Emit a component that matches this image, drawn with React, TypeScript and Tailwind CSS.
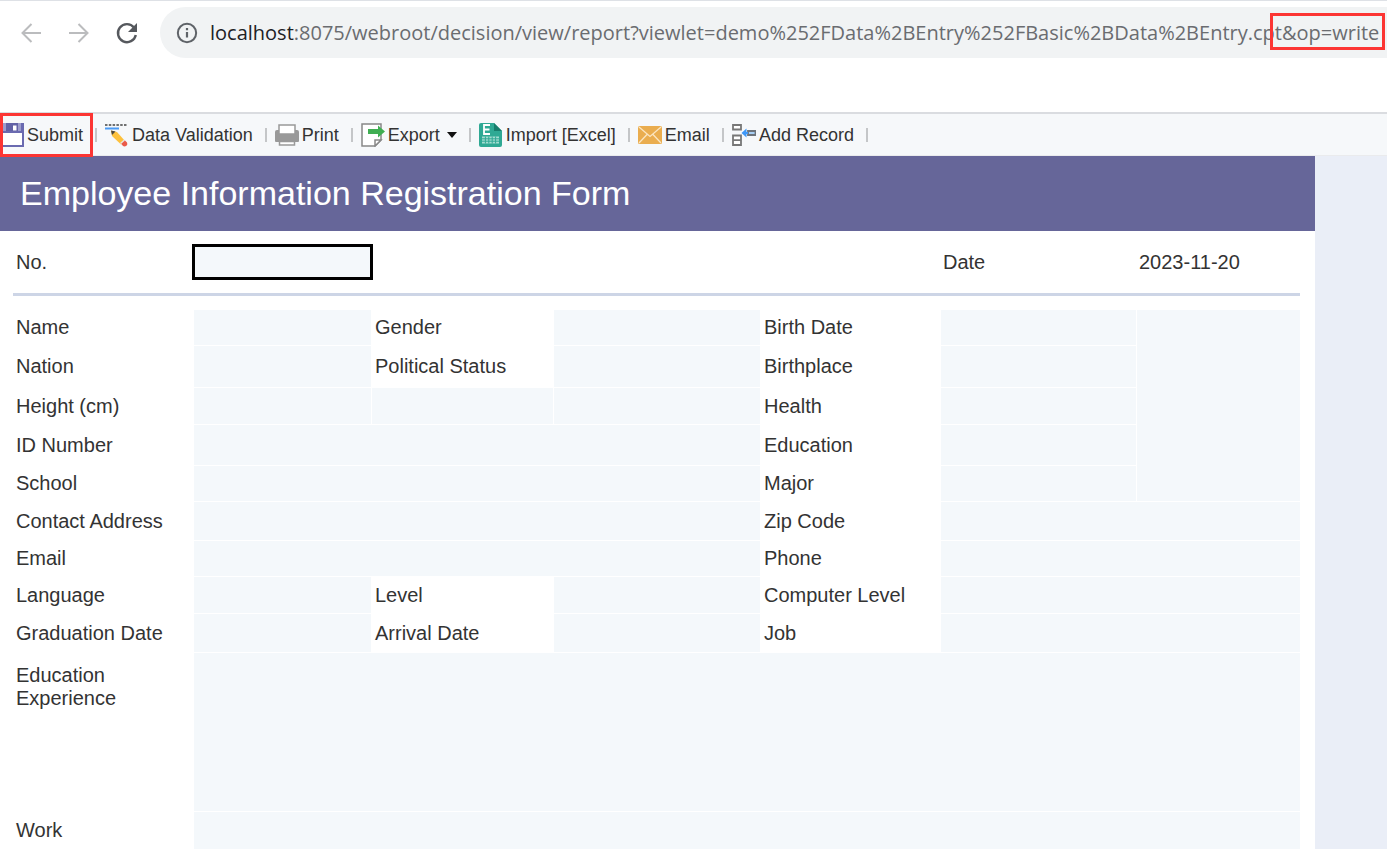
import { ReactNode, useState } from 'react';

interface ToolItem {
  label: string;
  icon: ReactNode;
  caret?: boolean;
}

interface Cell {
  label?: string;
  name?: string;
  span?: string;
  area?: boolean;
}

const SaveIcon = () => (
  <svg viewBox="0 0 24 24" className="h-6 w-6 shrink-0">
    <path d="M0 0h24v24H1.500L0 22.500z" fill="#6a6ab0" />
    <path d="M3 0h3v8H3zM18 0h3v8h-3z" fill="#9d9dcc" />
    <path d="M6 0h12v8H6z" fill="#6262a6" />
    <path d="M13 2.500h3.500v5H13z" fill="#fff" />
    <path d="M2 10h20v12H2z" fill="#fff" />
  </svg>
);

const ValidationIcon = () => (
  <svg viewBox="0 0 24 24" className="h-6 w-6 shrink-0">
    <path d="M0 2h22" stroke="#444" strokeWidth="1.500" strokeDasharray="2.500 1.300" />
    <path d="M0 5.500h14" stroke="#4a9bf5" strokeWidth="2" />
    <path d="m6 7.500 6 1.500 8 9-4 3.500L7 13z" fill="#fdc13c" />
    <path d="m6 7.500 4.500 1L7 12z" fill="#4b4740" />
    <path d="m16 20.500 3.500-3.500 2.500 2.500q1 2-.5 3.200-2 1.300-3.500.3z" fill="#ea5a49" />
    <path d="m15.500 20.500 4-3.500" stroke="#e6e6e6" strokeWidth="1.500" />
  </svg>
);

const PrintIcon = () => (
  <svg viewBox="0 0 24 24" className="h-6 w-6 shrink-0">
    <path d="M0 9q0-2 2-2h20q2 0 2 2v9q0 1-1 1H1q-1 0-1-1z" fill="#999" />
    <path d="M4 2h16v9H4z" fill="#fff" stroke="#999" strokeWidth="1.500" />
    <path d="M4.500 18.500h15V22h-15z" fill="#fff" stroke="#999" strokeWidth="1.500" />
  </svg>
);

const ExportIcon = () => (
  <svg viewBox="0 0 24 24" className="h-6 w-6 shrink-0">
    <path d="M1 1h19v16l-6 6H1z" fill="#fff" stroke="#888" strokeWidth="1.500" />
    <path d="M14 23v-6h6z" fill="#fff" stroke="#888" strokeWidth="1.500" />
    <path d="M7 6h10V2.500L24 8.500l-7 6V11H7z" fill="#3fae52" />
  </svg>
);

const ImportIcon = () => (
  <svg viewBox="0 0 24 24" className="h-6 w-6 shrink-0">
    <path d="M2 0h13l8 8v14q0 2-2 2H2q-2 0-2-2V2q0-2 2-2z" fill="#2fa994" />
    <path d="M15 0v8h8z" fill="#187d6c" />
    <path d="M11 2H5v9h6M5 6.500h5.500" fill="none" stroke="#fff" strokeWidth="1.800" />
    <path d="M3 13.500h17v7H3z" fill="#a4dcd1" />
    <path d="M3 15.800h17M3 18.200h17M6.400 13.500v7M9.800 13.500v7M13.200 13.500v7M16.600 13.500v7" stroke="#2fa994" strokeWidth="1" />
  </svg>
);

const MailIcon = () => (
  <svg viewBox="0 0 24 24" className="h-6 w-6 shrink-0">
    <rect y="3" width="24" height="18" rx="1.500" fill="#eaad4f" />
    <path d="m1 4 11 9.500L23 4M1 20l8-8.500M23 20l-8-8.500" fill="none" stroke="#fbe6c2" strokeWidth="1.300" />
  </svg>
);

const AddRecordIcon = () => (
  <svg viewBox="0 0 24 24" className="h-6 w-6 shrink-0">
    <path d="M1 2h8v4.500H1zM1 12.500h8v9.500H1zM1 17.200h8" fill="#fff" stroke="#777" strokeWidth="1.800" />
    <path d="M16 8h7.500v4H16z" fill="#a9d0f5" stroke="#6d747c" strokeWidth="1.800" />
    <path d="M9.500 10l5-4.500V9H16v2h-1.500v3.500z" fill="#3d97f7" />
  </svg>
);

const tools: ToolItem[] = [
  { label: 'Submit', icon: <SaveIcon /> },
  { label: 'Data Validation', icon: <ValidationIcon /> },
  { label: 'Print', icon: <PrintIcon /> },
  { label: 'Export', icon: <ExportIcon />, caret: true },
  { label: 'Import [Excel]', icon: <ImportIcon /> },
  { label: 'Email', icon: <MailIcon /> },
  { label: 'Add Record', icon: <AddRecordIcon /> },
];

const cells: Cell[] = [
  { label: 'Name' }, { name: 'Name' },
  { label: 'Gender' }, { name: 'Gender' },
  { label: 'Birth Date' }, { name: 'Birth Date' },
  { name: 'Photo', span: 'row-span-5', area: true },
  { label: 'Nation' }, { name: 'Nation' },
  { label: 'Political Status' }, { name: 'Political Status' },
  { label: 'Birthplace' }, { name: 'Birthplace' },
  { label: 'Height (cm)' }, { name: 'Height (cm)' },
  { name: 'Weight' }, { name: 'Blood Type' },
  { label: 'Health' }, { name: 'Health' },
  { label: 'ID Number' }, { name: 'ID Number', span: 'col-span-3' },
  { label: 'Education' }, { name: 'Education' },
  { label: 'School' }, { name: 'School', span: 'col-span-3' },
  { label: 'Major' }, { name: 'Major' },
  { label: 'Contact Address' }, { name: 'Contact Address', span: 'col-span-3' },
  { label: 'Zip Code' }, { name: 'Zip Code', span: 'col-span-2' },
  { label: 'Email' }, { name: 'Email', span: 'col-span-3' },
  { label: 'Phone' }, { name: 'Phone', span: 'col-span-2' },
  { label: 'Language' }, { name: 'Language' },
  { label: 'Level' }, { name: 'Level' },
  { label: 'Computer Level' }, { name: 'Computer Level', span: 'col-span-2' },
  { label: 'Graduation Date' }, { name: 'Graduation Date' },
  { label: 'Arrival Date' }, { name: 'Arrival Date' },
  { label: 'Job' }, { name: 'Job', span: 'col-span-2' },
  { label: 'Education Experience', span: 'self-start pt-[11px] pr-16' },
  { name: 'Education Experience', span: 'col-span-6', area: true },
  { label: 'Work' }, { name: 'Work', span: 'col-span-6', area: true },
];

const BrowserBar = () => (
  <header className="flex h-28 items-start border-t border-[#dee1e6] bg-white">
    <nav className="flex h-16 shrink-0 items-center gap-6 pl-[19px] pr-[21px]">
      <button aria-label="Back" className="text-[#bbbcbe]">
        <svg viewBox="0 0 24 24" className="h-6 w-6" fill="none" stroke="currentColor" strokeWidth="2">
          <path d="M22 12H3.500M12.500 3 3.500 12l9 9" />
        </svg>
      </button>
      <button aria-label="Forward" className="text-[#bbbcbe]">
        <svg viewBox="0 0 24 24" className="h-6 w-6" fill="none" stroke="currentColor" strokeWidth="2">
          <path d="M2 12h18.500M11.500 3l9 9-9 9" />
        </svg>
      </button>
      <button aria-label="Reload" className="text-[#55585d]">
        <svg viewBox="0 0 24 24" className="h-6 w-6">
          <path d="M19 6.500A9 9 0 1 0 20.800 14" fill="none" stroke="currentColor" strokeWidth="2.400" />
          <path d="M22 2v9h-9z" fill="currentColor" />
        </svg>
      </button>
    </nav>
    <div className="mt-1.5 flex h-[51px] min-w-0 flex-1 items-center gap-3 rounded-l-full bg-[#f1f3f4] pl-4">
      <svg viewBox="0 0 24 24" className="h-[22px] w-[22px] shrink-0" fill="none" stroke="#5f6368">
        <circle cx="12" cy="12" r="10" strokeWidth="2.200" />
        <path d="M12 11v6M12 6.500v2.500" strokeWidth="2.400" />
      </svg>
      <div
        role="textbox"
        aria-label="Address"
        className="relative min-w-0 whitespace-nowrap font-['Open_Sans',sans-serif] text-xl leading-9 text-[#6a6c70]"
      >
        <span className="text-[#202124]">localhost</span>
        :8075/webroot/decision/view/report?viewlet=demo%252FData%2BEntry%252FBasic%2BData%2BEntry.cpt
        <span className="relative">
          &amp;op=write
          <span className="absolute -top-1.5 -bottom-1 -left-3 -right-1.5 border-3 border-[#fc3533]" />
        </span>
      </div>
    </div>
  </header>
);

const Toolbar = () => (
  <div
    role="toolbar"
    className="flex h-11 items-center border-t-2 border-b border-t-[#dadce0] border-b-[#eaebed] bg-[#f6f8fa] text-lg text-[#333]"
  >
    {tools.map((tool, i) => (
      <div key={tool.label} className="relative flex items-center">
        <button className={`flex items-center gap-[3px] whitespace-nowrap ${i > 0 ? 'pl-2' : ''}`}>
          {tool.icon}
          {tool.label}
          {tool.caret && (
            <svg viewBox="0 0 10 6" className="ml-1 h-1.5 w-2.5">
              <path d="M0 0h10L5 6z" fill="#111" />
            </svg>
          )}
        </button>
        <span className="ml-3 h-3.5 w-0.5 bg-[#c4c6c8]" />
        {i === 0 && <span className="absolute -inset-y-2 left-0 right-1 border-3 border-[#fc3533]" />}
      </div>
    ))}
  </div>
);

const FormCell = ({ cell }: { cell: Cell }) => {
  const [value, setValue] = useState('');

  if (cell.label) {
    return (
      <label htmlFor={cell.label} className={`self-center pl-[3px] ${cell.span ?? ''}`}>
        {cell.label}
      </label>
    );
  }

  const style = `h-full w-full min-w-0 resize-none bg-[#f4f8fb] px-1 outline-none ${cell.span ?? ''}`;
  return cell.area ? (
    <textarea id={cell.name} aria-label={cell.name} className={style} value={value} onChange={(e) => setValue(e.target.value)} />
  ) : (
    <input id={cell.name} aria-label={cell.name} className={style} value={value} onChange={(e) => setValue(e.target.value)} />
  );
};

const App = () => {
  return (
    <div className="flex min-h-screen flex-col overflow-hidden bg-white font-['Liberation_Sans',Arial,sans-serif]">
      <BrowserBar />
      <Toolbar />
      <main className="flex-1 bg-[#eaeef7] pr-[72px]">
        <form className="bg-white text-xl leading-[23px] text-[#333]">
          <h1 className="flex h-[75px] items-center bg-[#666699] px-5 text-[34px] text-white">
            Employee Information Registration Form
          </h1>
          <div className="ml-[13px] mr-[15px]">
            <div className="grid h-[65px] grid-cols-[179fr_181fr_567fr_196fr_164fr] items-center border-b-3 border-[#cdd5e6]">
              <label htmlFor="no" className="pl-[3px]">No.</label>
              <input id="no" className="h-9 w-full min-w-0 border-3 border-black bg-[#f4f8fb] px-1 outline-none" />
              <span />
              <span className="pl-[3px]">Date</span>
              <span className="pl-[3px]">2023-11-20</span>
            </div>
            <div className="mt-3.5 grid grid-cols-[180fr_177fr_181fr_206fr_179fr_195fr_163fr] grid-rows-[35px_41px_36px_40px_35px_38px_35px_36px_38px_158px_37px] gap-px">
              {cells.map((cell, i) => (
                <FormCell key={i} cell={cell} />
              ))}
            </div>
          </div>
        </form>
      </main>
    </div>
  );
};

export default App;
